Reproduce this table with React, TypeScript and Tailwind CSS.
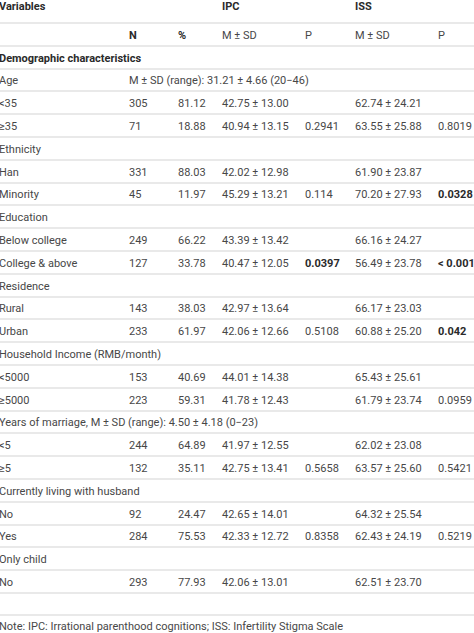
import React from 'react';

type Row =
  | { kind: 'group'; label: string; bold?: boolean }
  | { kind: 'span'; label: string; value: string }
  | { kind: 'data'; label: string; n: string; pct: string; ipc: string; ipcP?: string; ipcBold?: boolean; iss: string; issP?: string; issBold?: boolean }
  | { kind: 'empty' };

const rows: Row[] = [
  { kind: 'group', label: 'Demographic characteristics', bold: true },
  { kind: 'span', label: 'Age', value: 'M ± SD (range): 31.21 ± 4.66 (20−46)' },
  { kind: 'data', label: '<35', n: '305', pct: '81.12', ipc: '42.75 ± 13.00', iss: '62.74 ± 24.21' },
  { kind: 'data', label: '≥35', n: '71', pct: '18.88', ipc: '40.94 ± 13.15', ipcP: '0.2941', iss: '63.55 ± 25.88', issP: '0.8019' },
  { kind: 'group', label: 'Ethnicity' },
  { kind: 'data', label: 'Han', n: '331', pct: '88.03', ipc: '42.02 ± 12.98', iss: '61.90 ± 23.87' },
  { kind: 'data', label: 'Minority', n: '45', pct: '11.97', ipc: '45.29 ± 13.21', ipcP: '0.114', iss: '70.20 ± 27.93', issP: '0.0328', issBold: true },
  { kind: 'group', label: 'Education' },
  { kind: 'data', label: 'Below college', n: '249', pct: '66.22', ipc: '43.39 ± 13.42', iss: '66.16 ± 24.27' },
  { kind: 'data', label: 'College & above', n: '127', pct: '33.78', ipc: '40.47 ± 12.05', ipcP: '0.0397', ipcBold: true, iss: '56.49 ± 23.78', issP: '< 0.001', issBold: true },
  { kind: 'group', label: 'Residence' },
  { kind: 'data', label: 'Rural', n: '143', pct: '38.03', ipc: '42.97 ± 13.64', iss: '66.17 ± 23.03' },
  { kind: 'data', label: 'Urban', n: '233', pct: '61.97', ipc: '42.06 ± 12.66', ipcP: '0.5108', iss: '60.88 ± 25.20', issP: '0.042', issBold: true },
  { kind: 'group', label: 'Household Income (RMB/month)' },
  { kind: 'data', label: '<5000', n: '153', pct: '40.69', ipc: '44.01 ± 14.38', iss: '65.43 ± 25.61' },
  { kind: 'data', label: '≥5000', n: '223', pct: '59.31', ipc: '41.78 ± 12.43', iss: '61.79 ± 23.74', issP: '0.0959' },
  { kind: 'group', label: 'Years of marriage, M ± SD (range): 4.50 ± 4.18 (0−23)' },
  { kind: 'data', label: '<5', n: '244', pct: '64.89', ipc: '41.97 ± 12.55', iss: '62.02 ± 23.08' },
  { kind: 'data', label: '≥5', n: '132', pct: '35.11', ipc: '42.75 ± 13.41', ipcP: '0.5658', iss: '63.57 ± 25.60', issP: '0.5421' },
  { kind: 'group', label: 'Currently living with husband' },
  { kind: 'data', label: 'No', n: '92', pct: '24.47', ipc: '42.65 ± 14.01', iss: '64.32 ± 25.54' },
  { kind: 'data', label: 'Yes', n: '284', pct: '75.53', ipc: '42.33 ± 12.72', ipcP: '0.8358', iss: '62.43 ± 24.19', issP: '0.5219' },
  { kind: 'group', label: 'Only child' },
  { kind: 'data', label: 'No', n: '293', pct: '77.93', ipc: '42.06 ± 13.01', iss: '62.51 ± 23.70' },
  { kind: 'empty' },
];

// the table is wider than the window and gets cut at the right edge
const grid = 'grid grid-cols-[130px_49px_44px_83px_50px_83px_80px]';

function Cell({ children, bold }: { children?: React.ReactNode; bold?: boolean }) {
  return (
    <div className={`whitespace-nowrap ${bold ? 'font-bold text-[#2a2a2a]' : ''}`}>{children}</div>
  );
}

function BodyRow({ row }: { row: Row }) {
  const base = `${grid} h-[22.8px] pt-[2px] items-center border-b-2 border-[#e9e9e9]`;
  if (row.kind === 'empty') return <div className="h-[22px] border-b-2 border-[#e9e9e9]" />;
  if (row.kind === 'group') {
    return (
      <div className={base}>
        <div className={`col-span-7 whitespace-nowrap ${row.bold ? 'font-bold text-[#2a2a2a]' : ''}`}>{row.label}</div>
      </div>
    );
  }
  if (row.kind === 'span') {
    return (
      <div className={base}>
        <Cell>{row.label}</Cell>
        <div className="col-span-6 whitespace-nowrap">{row.value}</div>
      </div>
    );
  }
  return (
    <div className={base}>
      <Cell>{row.label}</Cell>
      <Cell>{row.n}</Cell>
      <Cell>{row.pct}</Cell>
      <Cell>{row.ipc}</Cell>
      <Cell bold={row.ipcBold}>{row.ipcP}</Cell>
      <Cell>{row.iss}</Cell>
      <Cell bold={row.issBold}>{row.issP}</Cell>
    </div>
  );
}

export default function App() {
  return (
    <div
      className="w-[474px] h-[633px] overflow-hidden bg-white text-[11px] leading-[13px] text-[#474747]"
      style={{ fontFamily: 'Roboto, "Liberation Sans", sans-serif' }}
    >
      <div className="w-[519px] -ml-px">
        <div className={`${grid} h-[24px] items-start border-b-2 border-[#e9e9e9] font-bold text-[#2a2a2a]`}>
          <div className="col-span-3">Variables</div>
          <div className="col-span-2">IPC</div>
          <div className="col-span-2">ISS</div>
        </div>
        <div className={`${grid} h-[22.8px] pt-[2px] items-center border-b-2 border-[#e9e9e9]`}>
          <div />
          <Cell bold>N</Cell>
          <Cell bold>%</Cell>
          <Cell>M ± SD</Cell>
          <Cell>P</Cell>
          <Cell>M ± SD</Cell>
          <Cell>P</Cell>
        </div>
        {rows.map((r, i) => (
          <BodyRow key={i} row={r} />
        ))}
        <div className="pt-[4px] whitespace-nowrap">
          Note: IPC: Irrational parenthood cognitions; ISS: Infertility Stigma Scale
        </div>
      </div>
    </div>
  );
}
